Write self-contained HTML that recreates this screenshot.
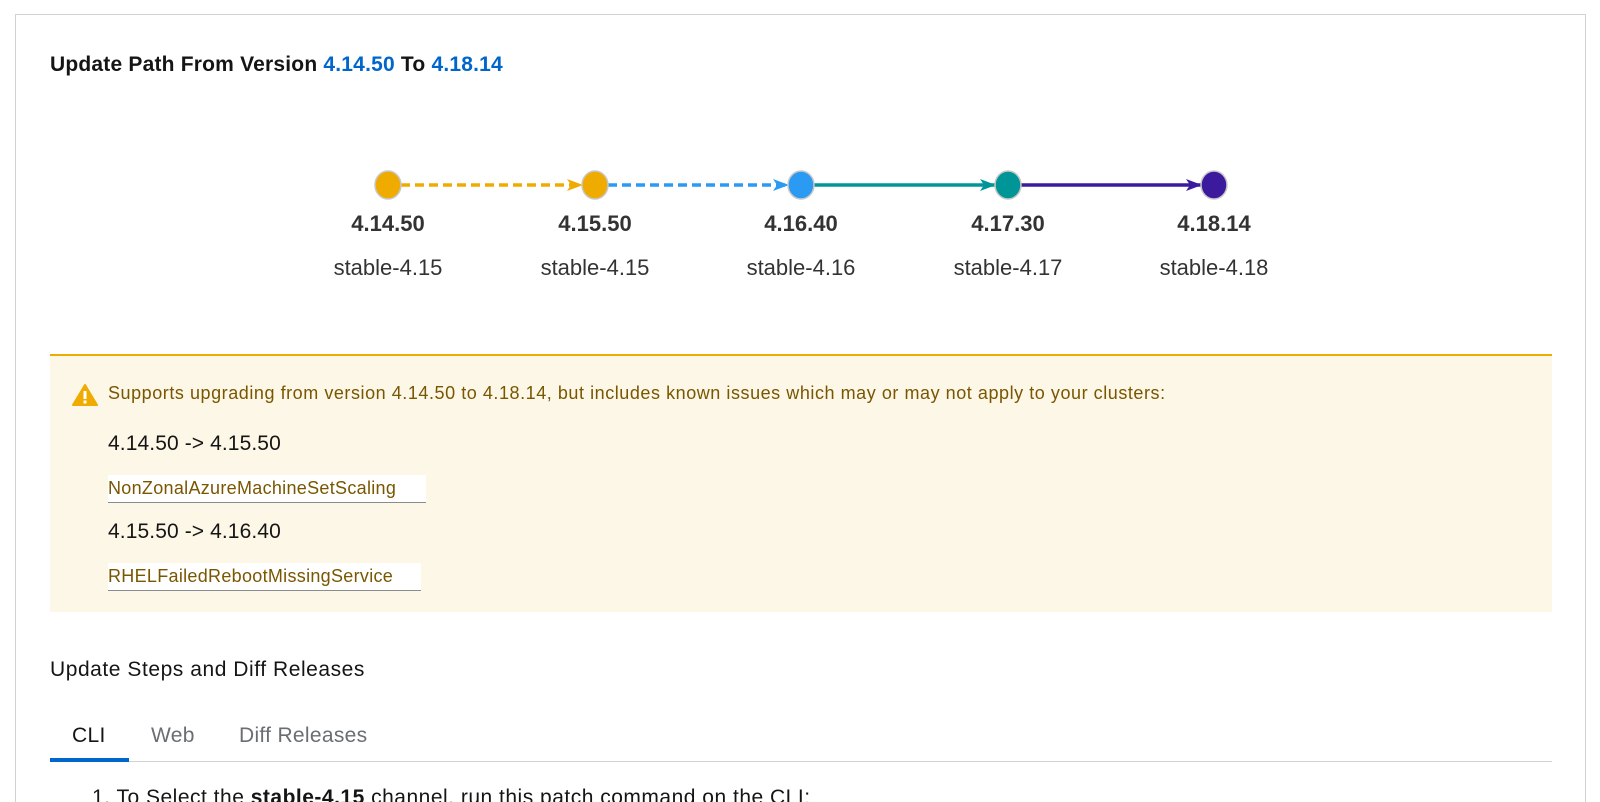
<!DOCTYPE html>
<html><head><meta charset="utf-8"><style>
html,body{margin:0;width:1600px;height:802px;overflow:hidden}
body{position:relative;background:#fff;font-family:"Liberation Sans",sans-serif;color:#151515}
.card{position:absolute;left:15px;top:14px;width:1571px;height:800px;border:1px solid #d2d2d2;box-sizing:border-box}
.t{position:absolute;left:50px;top:53px;font-size:21px;font-weight:bold;letter-spacing:0.2px}
.t span{color:#0066cc}
.alert{position:absolute;left:50px;top:354px;width:1502px;height:258px;background:#fdf7e7;border-top:2px solid #f0ab00;box-sizing:border-box}
.msg{position:absolute;left:58px;top:27px;font-size:18px;letter-spacing:0.55px;color:#795600}
.h{position:absolute;left:58px;font-size:21px;letter-spacing:0.1px;color:#151515}
.lab{position:absolute;left:58px;width:318px;height:27px;background:#fff;border-bottom:1px solid #8a8d90;font-size:18px;letter-spacing:0.3px;color:#795600;line-height:27px}
.s{position:absolute;left:50px;top:658px;font-size:21px;letter-spacing:0.55px}
.tab{position:absolute;top:724px;font-size:21px;letter-spacing:0.3px;color:#6a6e73}
.line{position:absolute;left:50px;top:761px;width:1502px;height:1px;background:#d2d2d2}
.act{position:absolute;left:50px;top:758px;width:79px;height:4px;background:#0066cc}
.step{position:absolute;left:92px;top:786px;font-size:21px;letter-spacing:0.5px;white-space:nowrap}
</style></head><body>
<div class="card"></div>
<div class="t">Update Path From Version <span>4.14.50</span> To <span>4.18.14</span></div>
<svg width="1600" height="300" style="position:absolute;left:0;top:0" font-family="Liberation Sans, sans-serif">
<defs>
<marker id="a1" markerWidth="16" markerHeight="12" refX="15" refY="6" orient="auto" markerUnits="userSpaceOnUse" viewBox="0 0 16 12"><path d="M0,0 L16,6 L0,12 L4,6z" fill="#f0ab00"/></marker>
<marker id="a2" markerWidth="16" markerHeight="12" refX="15" refY="6" orient="auto" markerUnits="userSpaceOnUse" viewBox="0 0 16 12"><path d="M0,0 L16,6 L0,12 L4,6z" fill="#2b9af3"/></marker>
<marker id="a3" markerWidth="16" markerHeight="12" refX="15" refY="6" orient="auto" markerUnits="userSpaceOnUse" viewBox="0 0 16 12"><path d="M0,0 L16,6 L0,12 L4,6z" fill="#009596"/></marker>
<marker id="a4" markerWidth="16" markerHeight="12" refX="15" refY="6" orient="auto" markerUnits="userSpaceOnUse" viewBox="0 0 16 12"><path d="M0,0 L16,6 L0,12 L4,6z" fill="#3c1a9e"/></marker>
</defs>
<g stroke-width="3.5">
<line x1="401" y1="185" x2="582" y2="185" stroke="#f0ab00" stroke-dasharray="9,5" marker-end="url(#a1)"/>
<line x1="608" y1="185" x2="788" y2="185" stroke="#2b9af3" stroke-dasharray="9,5" marker-end="url(#a2)"/>
<line x1="814" y1="185" x2="995" y2="185" stroke="#009596" marker-end="url(#a3)"/>
<line x1="1021" y1="185" x2="1201" y2="185" stroke="#3c1a9e" marker-end="url(#a4)"/>
</g>
<g stroke="#c8c8c8" stroke-width="1.5">
<ellipse cx="388" cy="185" rx="13" ry="14" fill="#f0ab00"/>
<ellipse cx="595" cy="185" rx="13" ry="14" fill="#f0ab00"/>
<ellipse cx="801" cy="185" rx="13" ry="14" fill="#2b9af3"/>
<ellipse cx="1008" cy="185" rx="13" ry="14" fill="#009596"/>
<ellipse cx="1214" cy="185" rx="13" ry="14" fill="#3c1a9e"/>
</g>
<g text-anchor="middle" font-size="22" fill="#333">
<g font-weight="bold"><text x="388" y="231">4.14.50</text><text x="595" y="231">4.15.50</text><text x="801" y="231">4.16.40</text><text x="1008" y="231">4.17.30</text><text x="1214" y="231">4.18.14</text></g>
<text x="388" y="275">stable-4.15</text><text x="595" y="275">stable-4.15</text><text x="801" y="275">stable-4.16</text><text x="1008" y="275">stable-4.17</text><text x="1214" y="275">stable-4.18</text>
</g>
</svg>
<div class="alert">
<svg width="26" height="22" style="position:absolute;left:22px;top:28px" viewBox="0 0 26 22"><path d="M13 1 L25 21 L1 21 Z" fill="#f0ab00" stroke="#f0ab00" stroke-width="2" stroke-linejoin="round"/><rect x="11.5" y="7" width="3" height="8" fill="#fff"/><rect x="11.5" y="16.5" width="3" height="3" fill="#fff"/></svg>
<div class="msg">Supports upgrading from version 4.14.50 to 4.18.14, but includes known issues which may or may not apply to your clusters:</div>
<div class="h" style="top:76px">4.14.50 -&gt; 4.15.50</div>
<div class="lab" style="top:119px">NonZonalAzureMachineSetScaling</div>
<div class="h" style="top:164px">4.15.50 -&gt; 4.16.40</div>
<div class="lab" style="top:207px;width:313px">RHELFailedRebootMissingService</div>
</div>
<div class="s">Update Steps and Diff Releases</div>
<div class="tab" style="left:72px;color:#151515">CLI</div>
<div class="tab" style="left:151px">Web</div>
<div class="tab" style="left:239px">Diff Releases</div>
<div class="line"></div><div class="act"></div>
<div class="step">1. To Select the <b>stable-4.15</b> channel, run this patch command on the CLI:</div>
</body></html>
